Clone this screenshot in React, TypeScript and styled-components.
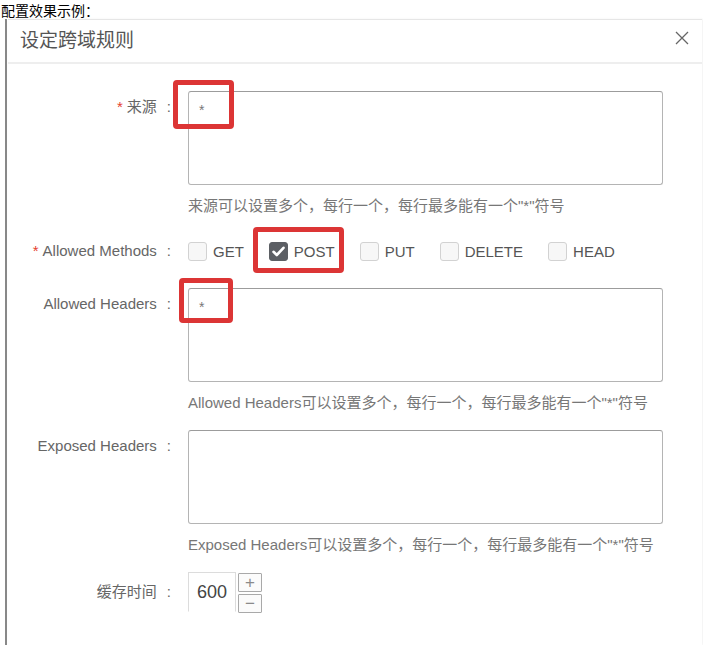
import React from "react";
import styled, { createGlobalStyle } from "styled-components";

const GlobalStyle = createGlobalStyle`
  html, body {
    margin: 0;
    padding: 0;
    background: #fff;
  }
  body {
    font-family: "Liberation Sans", "Noto Sans CJK SC", Arial, sans-serif;
    overflow: hidden;
  }
`;

const Caption = styled.div`
  height: 19px;
  padding-left: 1px;
  font-size: 14px;
  line-height: 21px;
  color: #000;
  font-family: "Noto Sans CJK SC", sans-serif;
`;

const Frame = styled.div`
  position: relative;
  margin-left: 5px;
  padding-left: 1px;
  border-left: 2px solid #888;
  min-height: calc(100vh - 19px);
  display: flex;
`;

const Dialog = styled.div`
  flex: 1;
  margin-right: 1px;
  background: #fff;
  border-top: 1px solid #e6e6e6;
  box-shadow: 1px 0 2px rgba(0, 0, 0, 0.06);
`;

const Header = styled.div`
  height: 44px;
  box-sizing: border-box;
  display: flex;
  align-items: center;
  justify-content: space-between;
  padding: 0 12px 6px 12px;
  border-bottom: 2px solid #eeeeee;
`;

const Title = styled.h3`
  margin: 0;
  font-size: 19px;
  font-weight: normal;
  color: #555;
  font-family: "Noto Sans CJK SC", sans-serif;
`;

const CloseButton = styled.button`
  width: 16px;
  height: 16px;
  padding: 0;
  border: none;
  background: none;
  display: flex;
  align-items: center;
  justify-content: center;
  cursor: pointer;
`;

const Body = styled.div`
  padding-top: 27px;
`;

const FormItem = styled.div<{ $gap?: number }>`
  display: flex;
  align-items: flex-start;
  margin-bottom: ${(p) => p.$gap ?? 17}px;
`;

const Label = styled.label<{ $height?: number }>`
  flex: none;
  width: 165px;
  margin-right: 15px;
  text-align: right;
  font-size: 15px;
  line-height: ${(p) => p.$height ?? 32}px;
  color: #666;
  white-space: nowrap;

  &::after {
    content: ":";
    margin: 0 2px 0 10px;
  }
`;

const Required = styled.span`
  color: #e5412f;
  margin-right: 4px;
`;

const Control = styled.div`
  display: flex;
  flex-direction: column;
`;

const AreaWrap = styled.div`
  position: relative;
`;

const TextArea = styled.textarea`
  display: block;
  width: 475px;
  height: 94px;
  box-sizing: border-box;
  margin: 0;
  padding: 8px 10px;
  border: 1px solid #b4b4b4;
  border-top-color: #9c9c9c;
  border-radius: 3px;
  resize: none;
  outline: none;
  font-family: "Liberation Sans", Arial, sans-serif;
  font-size: 14px;
  line-height: 20px;
  color: #777;
`;

const Help = styled.div`
  margin-top: 11px;
  font-size: 15px;
  line-height: 20px;
  color: #777;
  white-space: nowrap;
`;

const Highlight = styled.div<{ $left: number; $top: number; $w: number; $h: number }>`
  position: absolute;
  left: ${(p) => p.$left}px;
  top: ${(p) => p.$top}px;
  width: ${(p) => p.$w}px;
  height: ${(p) => p.$h}px;
  box-sizing: border-box;
  border: 5px solid #dc3535;
  border-radius: 4px;
  pointer-events: none;
`;

const Methods = styled.div`
  height: 40px;
  display: flex;
  align-items: center;
`;

const CheckItem = styled.label`
  position: relative;
  display: flex;
  align-items: center;
  gap: 6px;
  margin-right: 25px;
  font-size: 15px;
  color: #555;
  cursor: pointer;
`;

const Box = styled.span<{ $checked?: boolean }>`
  width: 19px;
  height: 19px;
  box-sizing: border-box;
  border-radius: 3px;
  border: 1px solid ${(p) => (p.$checked ? "#5c5f64" : "#d2d2d2")};
  background: ${(p) => (p.$checked ? "#5c5f64" : "#f7f7f7")};
  display: flex;
  align-items: center;
  justify-content: center;
`;

const Stepper = styled.div`
  display: flex;
  align-items: flex-start;
`;

const NumberBox = styled.div`
  width: 48px;
  height: 40px;
  box-sizing: border-box;
  border: 1px solid #dcdcdc;
  border-bottom-color: transparent;
  padding-left: 8px;
  display: flex;
  align-items: center;
  font-size: 18px;
  color: #444;
`;

const StepButtons = styled.div`
  margin: 1px 0 0 2px;
  display: flex;
  flex-direction: column;
  gap: 2px;
`;

const StepButton = styled.button`
  width: 24px;
  height: 19px;
  box-sizing: border-box;
  padding: 0;
  border: 1px solid #a9a9a9;
  border-radius: 1px;
  background: #fbfbfb;
  color: #8a8a8a;
  font-family: "Liberation Sans", Arial, sans-serif;
  font-size: 17px;
  line-height: 15px;
  cursor: pointer;
`;

const methods = [
  { name: "GET", checked: false },
  { name: "POST", checked: true },
  { name: "PUT", checked: false },
  { name: "DELETE", checked: false },
  { name: "HEAD", checked: false },
];

function CloseIcon() {
  return (
    <svg width="14" height="14" viewBox="0 0 14 14">
      <path d="M1 1 L13 13 M13 1 L1 13" stroke="#666" strokeWidth="1.3" fill="none" />
    </svg>
  );
}

function CheckMark() {
  return (
    <svg width="13" height="11" viewBox="0 0 13 11">
      <path d="M1.5 5.8 L4.8 9 L11.5 1.8" stroke="#fff" strokeWidth="2.6" fill="none" strokeLinecap="round" strokeLinejoin="round" />
    </svg>
  );
}

export default function App() {
  return (
    <>
      <GlobalStyle />
      <Caption>配置效果示例：</Caption>
      <Frame>
        <Dialog>
          <Header>
            <Title>设定跨域规则</Title>
            <CloseButton aria-label="close">
              <CloseIcon />
            </CloseButton>
          </Header>
          <Body>
            <FormItem $gap={15}>
              <Label>
                <Required>*</Required>来源
              </Label>
              <Control>
                <AreaWrap>
                  <TextArea readOnly value="*" />
                  <Highlight $left={-15} $top={-11} $w={61} $h={49} />
                </AreaWrap>
                <Help>来源可以设置多个，每行一个，每行最多能有一个"*"符号</Help>
              </Control>
            </FormItem>

            <FormItem>
              <Label $height={40}>
                <Required>*</Required>Allowed Methods
              </Label>
              <Methods>
                {methods.map((m) => (
                  <CheckItem key={m.name}>
                    <Box $checked={m.checked}>{m.checked && <CheckMark />}</Box>
                    {m.name}
                    {m.checked && <Highlight $left={-16} $top={-15} $w={91} $h={46} />}
                  </CheckItem>
                ))}
              </Methods>
            </FormItem>

            <FormItem>
              <Label>Allowed Headers</Label>
              <Control>
                <AreaWrap>
                  <TextArea readOnly value="*" />
                  <Highlight $left={-9} $top={-10} $w={54} $h={45} />
                </AreaWrap>
                <Help>Allowed Headers可以设置多个，每行一个，每行最多能有一个"*"符号</Help>
              </Control>
            </FormItem>

            <FormItem $gap={17}>
              <Label>Exposed Headers</Label>
              <Control>
                <TextArea readOnly value="" />
                <Help>Exposed Headers可以设置多个，每行一个，每行最多能有一个"*"符号</Help>
              </Control>
            </FormItem>

            <FormItem>
              <Label $height={40}>缓存时间</Label>
              <Stepper>
                <NumberBox>600</NumberBox>
                <StepButtons>
                  <StepButton>+</StepButton>
                  <StepButton>−</StepButton>
                </StepButtons>
              </Stepper>
            </FormItem>
          </Body>
        </Dialog>
      </Frame>
    </>
  );
}
